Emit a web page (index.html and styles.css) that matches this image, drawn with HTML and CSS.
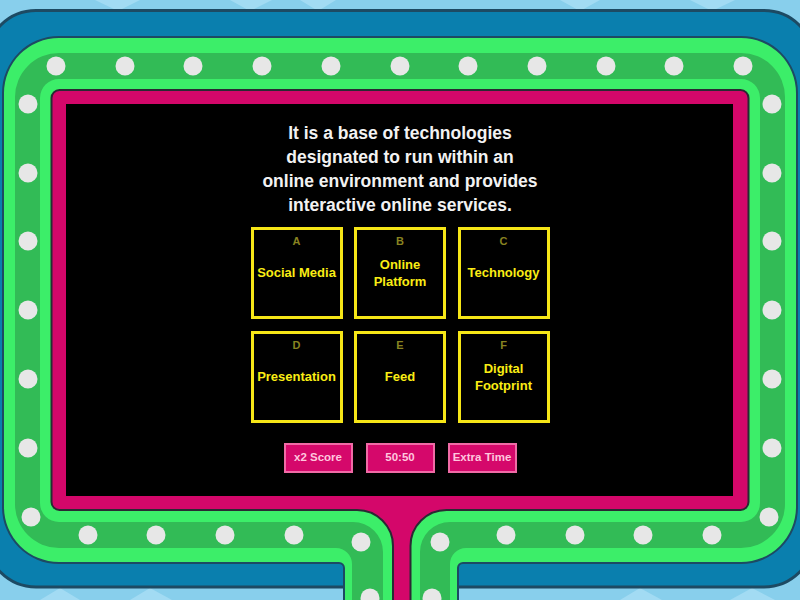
FILE: index.html
```html
<!DOCTYPE html>
<html lang="en">
<head>
<meta charset="utf-8">
<title>Quiz</title>
<link rel="stylesheet" href="styles.css">
</head>
<body>
<div class="stage">
  <svg class="backdrop" width="800" height="600" viewBox="0 0 800 600" aria-hidden="true">
    <rect x="0" y="0" width="800" height="600" fill="#88cfec"/>
    <g fill="#a2dbf3">
      <polygon points="95,0 118,11 140,0"/>
      <polygon points="230,0 250,11 272,0"/>
      <polygon points="300,0 318,11 336,0"/>
      <polygon points="560,0 580,11 600,0"/>
      <polygon points="690,0 712,11 735,0"/>
      <polygon points="40,600 60,588 80,600"/>
      <polygon points="130,600 150,588 172,600"/>
      <polygon points="620,600 640,588 662,600"/>
      <polygon points="730,600 752,588 775,600"/>
    </g>
    <rect x="-14" y="10.5" width="828" height="576.5" rx="50" ry="50" fill="#0a7fae" stroke="#1d4a63" stroke-width="3"/>
    <path fill="#1d4a63" d="M59 36 H741 A57 57 0 0 1 798 93 V507 A57 57 0 0 1 741 564 H463 A4 4 0 0 0 459 568 V620 H343 V568 A4 4 0 0 0 339 564 H59 A57 57 0 0 1 2 507 V93 A57 57 0 0 1 59 36 Z"/>
    <path fill="#3cee69" d="M59 38 H741 A55 55 0 0 1 796 93 V507 A55 55 0 0 1 741 562 H463 A6 6 0 0 0 457 568 V620 H345 V568 A6 6 0 0 0 339 562 H59 A55 55 0 0 1 4 507 V93 A55 55 0 0 1 59 38 Z"/>
    <path fill="#32bb56" d="M59 53 H741 A44 44 0 0 1 785 97 V504 A44 44 0 0 1 741 548 H466 A16 16 0 0 0 450 564 V620 H352 V564 A16 16 0 0 0 336 548 H59 A44 44 0 0 1 15 504 V97 A44 44 0 0 1 59 53 Z"/>
    <path fill="#3cee69" d="M59 79 H741 A19 19 0 0 1 760 98 V503 A19 19 0 0 1 741 522 H450 A30 30 0 0 0 420 552 V620 H383 V552 A30 30 0 0 0 353 522 H59 A19 19 0 0 1 40 503 V98 A19 19 0 0 1 59 79 Z"/>
    <path fill="#d4076a" stroke="#2a2a33" stroke-width="2" d="M59.5 90 H740.5 A8 8 0 0 1 748.5 98 V502 A8 8 0 0 1 740.5 510 H446.5 A36 36 0 0 0 410.5 546 V620 H393 V546 A36 36 0 0 0 357 510 H59.5 A8 8 0 0 1 51.5 502 V98 A8 8 0 0 1 59.5 90 Z"/>
    <rect x="66" y="104" width="667" height="392" fill="#000"/>
    <g fill="#e7e7e7">
      <circle cx="56" cy="66" r="9.5"/>
      <circle cx="125" cy="66" r="9.5"/>
      <circle cx="193" cy="66" r="9.5"/>
      <circle cx="262" cy="66" r="9.5"/>
      <circle cx="331" cy="66" r="9.5"/>
      <circle cx="400" cy="66" r="9.5"/>
      <circle cx="468" cy="66" r="9.5"/>
      <circle cx="537" cy="66" r="9.5"/>
      <circle cx="606" cy="66" r="9.5"/>
      <circle cx="674" cy="66" r="9.5"/>
      <circle cx="743" cy="66" r="9.5"/>
      <circle cx="28" cy="104" r="9.5"/>
      <circle cx="28" cy="173" r="9.5"/>
      <circle cx="28" cy="241" r="9.5"/>
      <circle cx="28" cy="310" r="9.5"/>
      <circle cx="28" cy="379" r="9.5"/>
      <circle cx="28" cy="448" r="9.5"/>
      <circle cx="31" cy="517" r="9.5"/>
      <circle cx="772" cy="104" r="9.5"/>
      <circle cx="772" cy="173" r="9.5"/>
      <circle cx="772" cy="241" r="9.5"/>
      <circle cx="772" cy="310" r="9.5"/>
      <circle cx="772" cy="379" r="9.5"/>
      <circle cx="772" cy="448" r="9.5"/>
      <circle cx="769" cy="517" r="9.5"/>
      <circle cx="88" cy="535" r="9.5"/>
      <circle cx="156" cy="535" r="9.5"/>
      <circle cx="225" cy="535" r="9.5"/>
      <circle cx="294" cy="535" r="9.5"/>
      <circle cx="361" cy="542" r="9.5"/>
      <circle cx="370" cy="598" r="9.5"/>
      <circle cx="506" cy="535" r="9.5"/>
      <circle cx="575" cy="535" r="9.5"/>
      <circle cx="643" cy="535" r="9.5"/>
      <circle cx="712" cy="535" r="9.5"/>
      <circle cx="440" cy="542" r="9.5"/>
      <circle cx="432" cy="598" r="9.5"/>
    </g>
  </svg>
  <main class="screen">
    <p class="question">It is a base of technologies<br>designated to run within an<br>online environment and provides<br>interactive online services.</p>
    <div class="answers">
      <div class="answer"><span class="key">A</span><span class="label">Social Media</span></div>
      <div class="answer"><span class="key">B</span><span class="label">Online<br>Platform</span></div>
      <div class="answer"><span class="key">C</span><span class="label">Technology</span></div>
      <div class="answer"><span class="key">D</span><span class="label">Presentation</span></div>
      <div class="answer"><span class="key">E</span><span class="label">Feed</span></div>
      <div class="answer"><span class="key">F</span><span class="label">Digital<br>Footprint</span></div>
    </div>
    <div class="powerups">
      <button class="powerup" type="button">x2 Score</button>
      <button class="powerup" type="button">50:50</button>
      <button class="powerup" type="button">Extra Time</button>
    </div>
  </main>
</div>
</body>
</html>
```

FILE: styles.css
```css
html, body {
  margin: 0;
  padding: 0;
}

body {
  width: 800px;
  height: 600px;
  overflow: hidden;
  background: #88cfec;
  font-family: "Liberation Sans", Arial, sans-serif;
}

.stage {
  display: grid;
  width: 800px;
  height: 600px;
}

.backdrop,
.screen {
  grid-area: 1 / 1;
}

.backdrop {
  display: block;
}

.screen {
  display: flex;
  flex-direction: column;
  align-items: center;
  padding-top: 121px;
}

.question {
  margin: 0;
  color: #f2f2f2;
  font-weight: 700;
  font-size: 17.5px;
  line-height: 24px;
  text-align: center;
}

.answers {
  display: grid;
  grid-template-columns: repeat(3, 92px);
  grid-auto-rows: 92px;
  column-gap: 11.5px;
  row-gap: 12px;
  margin-top: 10px;
}

.answer {
  display: grid;
  box-sizing: border-box;
  border: 3px solid #f6e617;
  background: #000;
}

.key,
.label {
  grid-area: 1 / 1;
  text-align: center;
  font-weight: 700;
}

.key {
  align-self: start;
  margin-top: 4px;
  font-size: 11px;
  line-height: 14px;
  color: #888320;
}

.label {
  align-self: center;
  font-size: 13px;
  line-height: 17.5px;
  color: #faed14;
}

.powerups {
  display: flex;
  gap: 13px;
  margin-top: 20px;
}

.powerup {
  box-sizing: border-box;
  width: 69px;
  height: 30px;
  padding: 0;
  border: 2px solid #f06ba6;
  background: #d5086b;
  color: #ffc6de;
  font-family: "Liberation Sans", Arial, sans-serif;
  font-weight: 700;
  font-size: 11.5px;
  line-height: 1;
  white-space: nowrap;
}
```
